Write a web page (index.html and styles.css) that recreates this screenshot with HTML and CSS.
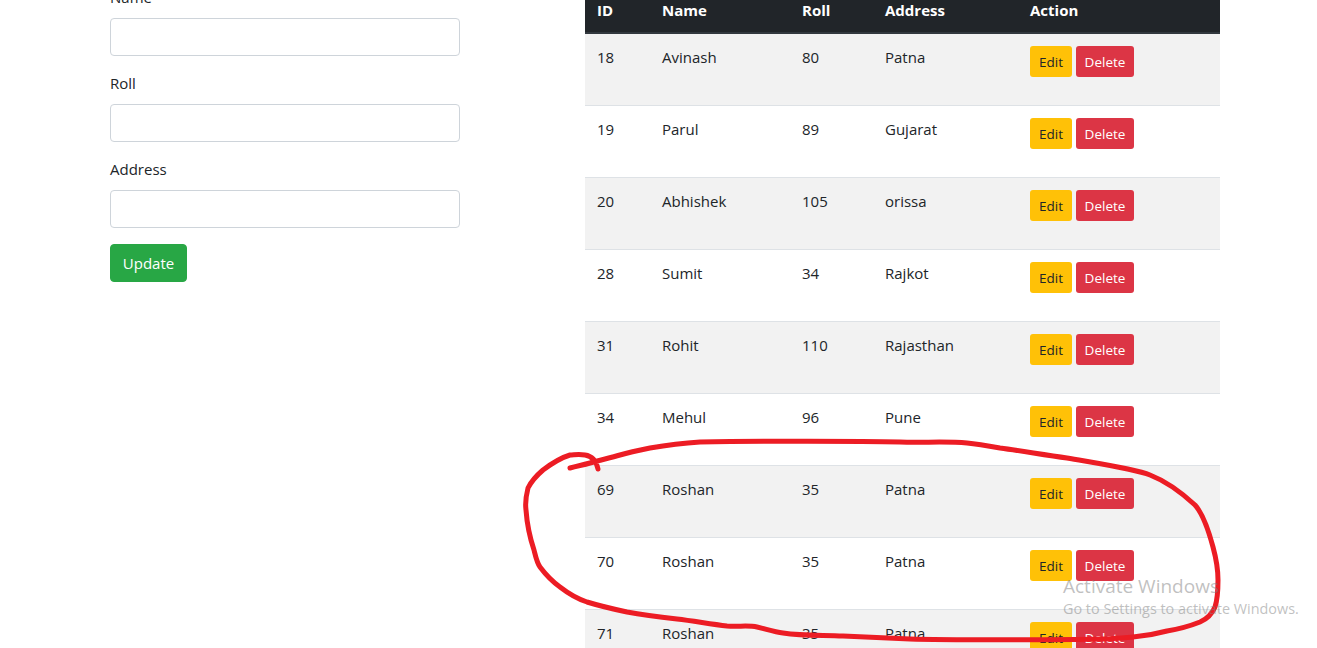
FILE: index.html
```html
<!DOCTYPE html>
<html lang="en">
<head>
<meta charset="utf-8">
<title>Students</title>
<link rel="stylesheet" href="styles.css">
</head>
<body>
<main class="page">
  <form class="form">
    <div class="group"><label class="label">Name</label><input class="input" type="text"></div>
    <div class="group"><label class="label">Roll</label><input class="input" type="text"></div>
    <div class="group"><label class="label">Address</label><input class="input" type="text"></div>
    <button class="btn btn-update" type="button">Update</button>
  </form>
  <table class="table">
    <colgroup><col class="c1"><col class="c2"><col class="c3"><col class="c4"><col class="c5"></colgroup>
    <thead><tr><th>ID</th><th>Name</th><th>Roll</th><th>Address</th><th>Action</th></tr></thead>
    <tbody>
      <tr><td>18</td><td>Avinash</td><td>80</td><td>Patna</td><td><div class="actions"><button class="btn-sm edit" type="button">Edit</button><button class="btn-sm del" type="button">Delete</button></div></td></tr>
      <tr><td>19</td><td>Parul</td><td>89</td><td>Gujarat</td><td><div class="actions"><button class="btn-sm edit" type="button">Edit</button><button class="btn-sm del" type="button">Delete</button></div></td></tr>
      <tr><td>20</td><td>Abhishek</td><td>105</td><td>orissa</td><td><div class="actions"><button class="btn-sm edit" type="button">Edit</button><button class="btn-sm del" type="button">Delete</button></div></td></tr>
      <tr><td>28</td><td>Sumit</td><td>34</td><td>Rajkot</td><td><div class="actions"><button class="btn-sm edit" type="button">Edit</button><button class="btn-sm del" type="button">Delete</button></div></td></tr>
      <tr><td>31</td><td>Rohit</td><td>110</td><td>Rajasthan</td><td><div class="actions"><button class="btn-sm edit" type="button">Edit</button><button class="btn-sm del" type="button">Delete</button></div></td></tr>
      <tr><td>34</td><td>Mehul</td><td>96</td><td>Pune</td><td><div class="actions"><button class="btn-sm edit" type="button">Edit</button><button class="btn-sm del" type="button">Delete</button></div></td></tr>
      <tr><td>69</td><td>Roshan</td><td>35</td><td>Patna</td><td><div class="actions"><button class="btn-sm edit" type="button">Edit</button><button class="btn-sm del" type="button">Delete</button></div></td></tr>
      <tr><td>70</td><td>Roshan</td><td>35</td><td>Patna</td><td><div class="actions"><button class="btn-sm edit" type="button">Edit</button><button class="btn-sm del" type="button">Delete</button></div></td></tr>
      <tr><td>71</td><td>Roshan</td><td>35</td><td>Patna</td><td><div class="actions"><button class="btn-sm edit" type="button">Edit</button><button class="btn-sm del" type="button">Delete</button></div></td></tr>
    </tbody>
  </table>
</main>
<svg class="scribble" width="1317" height="648" viewBox="0 0 1317 648" aria-hidden="true">
  <path d="M598 469 C596 460 592 456 585 455 C578 454 574 455 570 455 C560 458 551 464 543 470 C536 476 531 482 528 488 C526 496 525 503 526 510 C527 524 530 538 534 550 C536 558 537 563 540 567 C546 575 553 582 560 587 C569 594 578 599 587 602 C600 606 613 609 627 612 C644 615 660 617 677 619 C694 621 710 624 727 626 C738 627 748 625 757 627 C766 629 774 632 783 633 C803 636 823 635 843 636 C865 637 888 638 910 639 C940 640 1060 640 1100 639 C1112 639 1122 638 1133 637 C1145 636 1156 634 1167 631 C1179 629 1190 626 1200 622 C1207 619 1212 614 1215 607 C1218 598 1218 589 1218 580 C1218 568 1216 558 1213 547 C1209 532 1204 515 1195 505 C1182 493 1168 482 1150 475 C1135 469 1095 463 1067 458 C1045 455 1022 451 1000 448 C989 446 978 444 967 443 C945 441 922 443 900 442 C860 441 760 441 700 442 C683 443 667 445 650 448 C640 450 630 452 620 455 C610 458 600 460 590 463 C583 465 577 466 570 468"/>
</svg>
<aside class="watermark">
  <div class="wm-title">Activate Windows</div>
  <div class="wm-sub">Go to Settings to activate Windows.</div>
</aside>
</body>
</html>
```

FILE: styles.css
```css
* { box-sizing: border-box; }
html, body { margin: 0; height: 100%; overflow: hidden; background: #fff; }
body {
  font-family: "Open Sans", "Noto Sans", "Liberation Sans", sans-serif;
  font-size: 15px;
  line-height: 24px;
  color: #212529;
}
.page {
  display: flex;
  align-items: flex-start;
  margin-top: -14px;
  padding-left: 110px;
  gap: 125px;
}
.form { width: 350px; flex: none; }
.group { margin-bottom: 16px; }
.label { display: block; line-height: 23px; margin-bottom: 9px; }
.input {
  display: block;
  width: 100%;
  height: 38px;
  background: #fff;
  border: 1px solid #ced4da;
  border-radius: 4px;
}
.btn-update {
  display: block;
  width: 77px;
  height: 38px;
  padding: 0;
  font: inherit;
  color: #fff;
  background: #28a745;
  border: 1px solid #28a745;
  border-radius: 4px;
}
.table {
  width: 635px;
  flex: none;
  table-layout: fixed;
  border-collapse: separate;
  border-spacing: 0;
}
.c1 { width: 65px; }
.c2 { width: 140px; }
.c3 { width: 83px; }
.c4 { width: 145px; }
.c5 { width: 202px; }
th {
  padding: 12px 12px 10px;
  text-align: left;
  font-weight: 700;
  color: #fff;
  background: #212529;
  border-bottom: 2px solid #32383e;
}
td {
  height: 72px;
  padding: 11px 12px 12px;
  vertical-align: top;
  border-top: 1px solid #dee2e6;
}
tbody tr:first-child td { height: 71px; border-top: 0; }
tbody tr:nth-child(odd) td { background: #f2f2f2; }
.actions { display: flex; gap: 4px; margin-top: 1px; }
.btn-sm {
  height: 31px;
  padding: 0;
  font: inherit;
  font-size: 13.5px;
  border: 1px solid transparent;
  border-radius: 3px;
}
.edit { width: 42px; color: #212529; background: #ffc107; }
.del { width: 58px; color: #fff; background: #dc3545; }
.scribble {
  position: absolute;
  left: 0;
  top: 0;
  pointer-events: none;
}
.scribble path {
  fill: none;
  stroke: #ec1c24;
  stroke-width: 5;
  stroke-linecap: round;
  stroke-linejoin: round;
}
.watermark {
  position: absolute;
  left: 1063px;
  top: 573px;
  color: rgba(130, 130, 130, 0.5);
  white-space: nowrap;
}
.wm-title { font-size: 19px; line-height: 27px; }
.wm-sub { font-size: 14.4px; line-height: 17px; }
```
